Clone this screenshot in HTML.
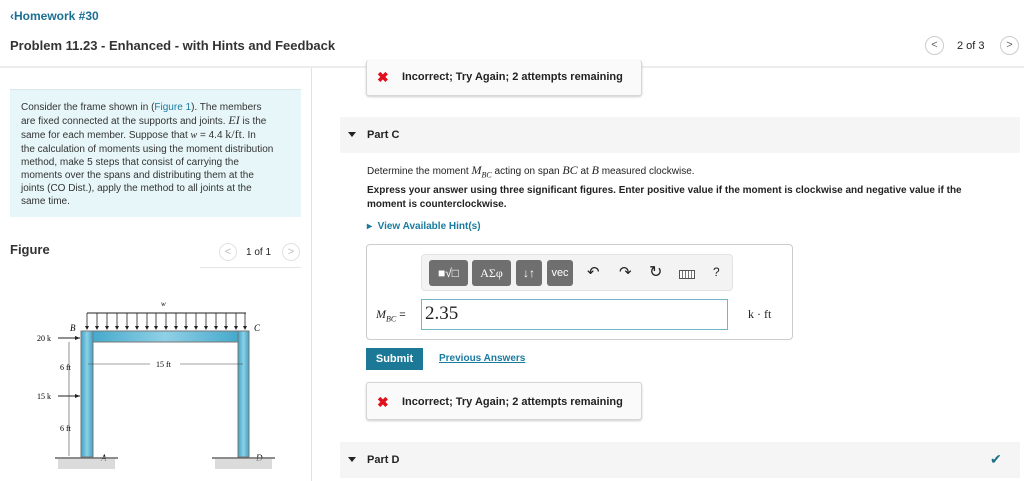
<!DOCTYPE html>
<html><head><meta charset="utf-8"><style>
*{margin:0;padding:0;box-sizing:border-box}
body{width:1024px;height:481px;overflow:hidden;background:#fff;font-family:"Liberation Sans",sans-serif;color:#222;position:relative}
.a{position:absolute;white-space:nowrap}
.fb{position:absolute;left:366px;width:276px;border:1px solid #d6d6d6;border-radius:3px;background:#fafafa;box-shadow:0 1px 2px rgba(0,0,0,.2);font-size:11px;font-weight:bold;color:#222}
.fb .x{color:#e0101e;font-size:14px;position:absolute;left:10px}
.bar{position:absolute;left:340px;width:680px;height:36px;background:#f5f5f5}
.tri{position:absolute;left:8px;top:15px;width:0;height:0;border-left:4px solid transparent;border-right:4px solid transparent;border-top:5px solid #222}
.btn{position:absolute;top:5px;height:26px;background:#6f6f6f;border-radius:3px;color:#fff;font-size:12px;text-align:center;line-height:26px}
.circ{position:absolute;width:18px;height:18px;border:1px solid #ccc;border-radius:50%;color:#666;font-size:11px;text-align:center;line-height:16px}
i{font-family:"Liberation Serif",serif}
</style></head><body>
<div class="a" style="left:10px;top:9px;font-size:12px;font-weight:bold;color:#1a6f93">‹Homework #30</div>
<div class="a" style="left:10px;top:38px;font-size:13px;font-weight:bold;color:#333">Problem 11.23 - Enhanced - with Hints and Feedback</div>
<div class="circ" style="left:925px;top:36px;width:19px;height:19px">&lt;</div>
<div class="a" style="left:957px;top:40px;font-size:11px">2 of 3</div>
<div class="circ" style="left:1000px;top:36px;width:19px;height:19px">&gt;</div>
<div class="a" style="left:0;top:66px;width:1024px;height:2px;background:#ececec"></div>
<div class="a" style="left:311px;top:68px;width:1px;height:413px;background:#e2e2e2"></div>

<div class="a" style="left:10px;top:89px;width:291px;height:128px;background:#e7f6f8;border-top:1px solid #d8e8ea"></div>
<div class="a" style="left:21px;top:101px;font-size:10px;line-height:13.2px;color:#333">Consider the frame shown in (<span style="color:#1a7ba0">Figure 1</span>). The members<br>are fixed connected at the supports and joints. <i style="font-size:12px">EI</i> is the<br>same for each member. Suppose that <i>w</i> = 4.4 <span style="font-family:'Liberation Serif',serif;font-size:12px">k/ft</span>. In<br>the calculation of moments using the moment distribution<br>method, make 5 steps that consist of carrying the<br>moments over the spans and distributing them at the<br>joints (CO Dist.), apply the method to all joints at the<br>same time.</div>

<div class="a" style="left:10px;top:242px;font-size:13px;font-weight:bold;color:#333">Figure</div>
<div class="circ" style="left:219px;top:243px;border-color:#e2e2e2;color:#bbb">&lt;</div>
<div class="a" style="left:246px;top:247px;font-size:10px">1 of 1</div>
<div class="circ" style="left:282px;top:243px;border-color:#e2e2e2;color:#bbb">&gt;</div>
<div class="a" style="left:200px;top:267px;width:101px;height:1px;background:#e5e5e5"></div>

<svg class="a" style="left:0;top:290px" width="311" height="191" viewBox="0 290 311 191">
<defs><linearGradient id="g" x1="0" x2="1"><stop offset="0" stop-color="#3ba3c7"/><stop offset=".5" stop-color="#8fd0e6"/><stop offset="1" stop-color="#3ba3c7"/></linearGradient></defs>
<text x="161" y="306" font-size="7" font-style="italic" font-family="Liberation Serif">w</text>
<line x1="87" y1="313" x2="246" y2="313" stroke="#222" stroke-width="1"/>
<g stroke="#222" stroke-width="0.8">
<path d="M87 313V329M97 313V329M107 313V329M117 313V329M127 313V329M137 313V329M147 313V329M156 313V329M166 313V329M176 313V329M186 313V329M196 313V329M206 313V329M216 313V329M226 313V329M236 313V329M245 313V329"/></g>
<g fill="#222"><path d="M85 326h4l-2 4zM95 326h4l-2 4zM105 326h4l-2 4zM115 326h4l-2 4zM125 326h4l-2 4zM135 326h4l-2 4zM145 326h4l-2 4zM154 326h4l-2 4zM164 326h4l-2 4zM174 326h4l-2 4zM184 326h4l-2 4zM194 326h4l-2 4zM204 326h4l-2 4zM214 326h4l-2 4zM224 326h4l-2 4zM234 326h4l-2 4zM243 326h4l-2 4z"/></g>
<rect x="81" y="331" width="168" height="11" fill="url(#g)" stroke="#777" stroke-width="1"/>
<rect x="81" y="331" width="12" height="126" fill="url(#g)" stroke="#777"/>
<rect x="238" y="331" width="11" height="126" fill="url(#g)" stroke="#777"/>
<text x="70" y="331" font-size="9" font-style="italic" font-family="Liberation Serif">B</text>
<text x="254" y="331" font-size="9" font-style="italic" font-family="Liberation Serif">C</text>
<text x="101" y="461" font-size="9" font-style="italic" font-family="Liberation Serif">A</text>
<text x="256" y="461" font-size="9" font-style="italic" font-family="Liberation Serif">D</text>
<text x="37" y="341" font-size="8" font-family="Liberation Serif">20 k</text>
<text x="37" y="399" font-size="8" font-family="Liberation Serif">15 k</text>
<path d="M58 338H80M58 396H80" stroke="#222"/><path d="M80 338l-5-2v4zM80 396l-5-2v4z" fill="#222"/>
<line x1="69" y1="342" x2="69" y2="456" stroke="#444" stroke-width=".6"/>
<text x="60" y="370" font-size="8" font-family="Liberation Serif">6 ft</text>
<text x="60" y="431" font-size="8" font-family="Liberation Serif">6 ft</text>
<line x1="88" y1="364" x2="243" y2="364" stroke="#444" stroke-width=".6"/>
<rect x="150" y="359" width="30" height="10" fill="#fff"/>
<text x="156" y="367" font-size="8" font-family="Liberation Serif">15 ft</text>
<path d="M55 458H118M212 458H275" stroke="#666" stroke-width="1.5"/>
<rect x="58" y="459" width="57" height="10" fill="#ccc" opacity=".7"/>
<rect x="215" y="459" width="57" height="10" fill="#ccc" opacity=".7"/>
</svg>

<div class="fb" style="top:60px;height:36px;border-top:none"><span class="x" style="top:9px">✖</span><span class="a" style="left:35px;top:11px">Incorrect; Try Again; 2 attempts remaining</span></div>
<div class="bar" style="top:117px"><div class="tri"></div><span class="a" style="left:27px;top:12px;font-size:11px;font-weight:bold">Part C</span></div>
<div class="a" style="left:367px;top:163px;font-size:10px">Determine the moment <i style="font-size:12px">M<sub style="font-size:8px">BC</sub></i> acting on span <i style="font-size:12px">BC</i> at <i style="font-size:12px">B</i> measured clockwise.</div>
<div class="a" style="left:367px;top:184px;font-size:10px;font-weight:bold;line-height:13.5px">Express your answer using three significant figures. Enter positive value if the moment is clockwise and negative value if the<br>moment is counterclockwise.</div>
<div class="a" style="left:367px;top:221px;font-size:10px;font-weight:bold;color:#1a7ba0">▸&nbsp; View Available Hint(s)</div>

<div class="a" style="left:366px;top:244px;width:427px;height:96px;border:1px solid #ccc;border-radius:4px"></div>
<div class="a" style="left:421px;top:254px;width:312px;height:37px;background:#f3f3f3;border:1px solid #e2e2e2;border-radius:4px">
<div class="btn" style="left:7px;width:39px">■√□</div>
<div class="btn" style="left:50px;width:39px;font-family:'Liberation Serif',serif">ΑΣφ</div>
<div class="btn" style="left:94px;width:26px">↓↑</div>
<div class="btn" style="left:125px;width:26px;font-size:11px">vec</div>
<span class="a" style="left:165px;top:8px;font-size:15px">↶</span>
<span class="a" style="left:197px;top:8px;font-size:15px">↷</span>
<span class="a" style="left:227px;top:7px;font-size:16px">↻</span>
<span class="a" style="left:257px;top:15px;width:16px;height:9px;border:1px solid #555;background:repeating-linear-gradient(90deg,#fff 0 2px,#777 2px 3px)"></span>
<span class="a" style="left:291px;top:10px;font-size:12px">?</span>
</div>
<div class="a" style="left:376px;top:307px;font-size:11px"><i style="font-size:12px">M<sub style="font-size:8px">BC</sub></i> =</div>
<div class="a" style="left:421px;top:299px;width:307px;height:31px;border:1px solid #73b4c8"><span class="a" style="left:3px;top:3px;font-family:'Liberation Serif',serif;font-size:19px">2.35</span></div>
<div class="a" style="left:748px;top:307px;font-family:'Liberation Serif',serif;font-size:12px">k · ft</div>
<div class="a" style="left:366px;top:348px;width:57px;height:22px;background:#1b7896;color:#fff;font-size:11px;font-weight:bold;text-align:center;line-height:22px">Submit</div>
<div class="a" style="left:439px;top:353px;font-size:10px;font-weight:bold;color:#1a7ba0;text-decoration:underline">Previous Answers</div>
<div class="fb" style="top:382px;height:38px"><span class="x" style="top:11px">✖</span><span class="a" style="left:35px;top:13px">Incorrect; Try Again; 2 attempts remaining</span></div>
<div class="bar" style="top:442px"><div class="tri"></div><span class="a" style="left:27px;top:12px;font-size:11px;font-weight:bold">Part D</span><span class="a" style="left:650px;top:9px;color:#1b6f86;font-size:14px">✔</span></div>
</body></html>
